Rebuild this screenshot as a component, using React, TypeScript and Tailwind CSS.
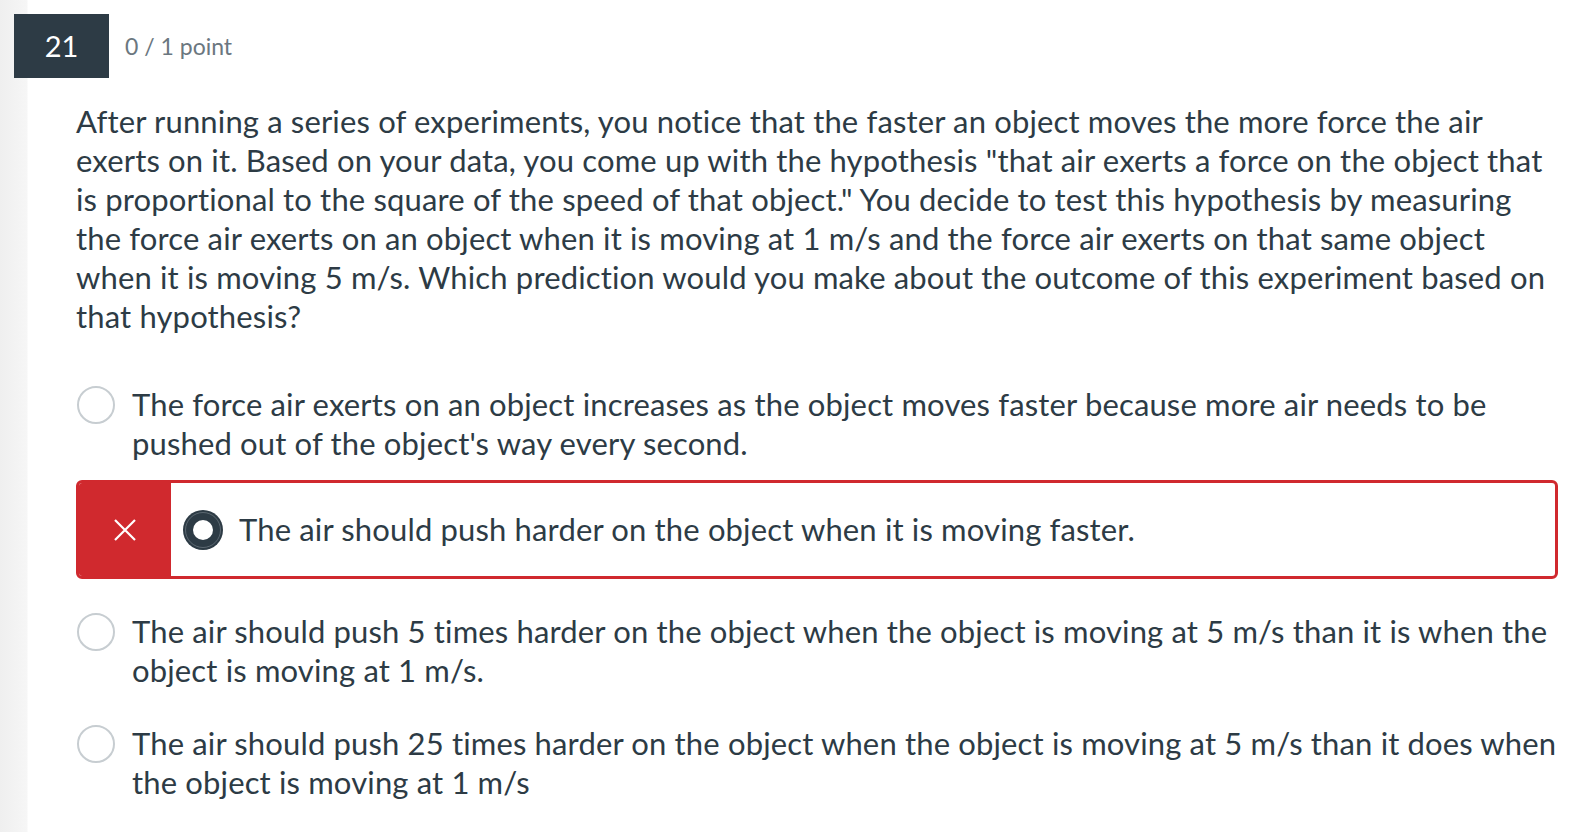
import React from "react";

const font = { fontFamily: "Lato, 'Noto Sans', sans-serif" };

function Radio() {
  return <div className="w-[38px] h-[38px] shrink-0 rounded-full border-2 border-[#c7cdd1] bg-white mt-[1px]" />;
}

function Lines({ lines }: { lines: string[] }) {
  return (
    <>
      {lines.map((l, i) => (
        <span key={i} className="block whitespace-nowrap">
          {l}
        </span>
      ))}
    </>
  );
}

export default function App() {
  return (
    <div
      className="w-[1574px] h-[832px] overflow-hidden text-[#2d3b45] bg-[linear-gradient(to_right,#efefef_0px,#f6f6f6_27px,#ffffff_28px)]"
      style={font}
    >
      <div className="flex items-center pt-[14px] pl-[14px]">
        <div className="w-[95px] h-[64px] bg-[#2d3b45] text-white text-[29px] flex items-center justify-center">21</div>
        <div className="ml-[16px] text-[23px] text-[#6b7780]">0 / 1 point</div>
      </div>
      <div className="pl-[76px]">
        <p className="mt-[24px] text-[31px] leading-[39px] tracking-[0.15px]">
          <Lines
            lines={[
              "After running a series of experiments, you notice that the faster an object moves the more force the air",
              'exerts on it. Based on your data, you come up with the hypothesis "that air exerts a force on the object that',
              'is proportional to the square of the speed of that object." You decide to test this hypothesis by measuring',
              "the force air exerts on an object when it is moving at 1 m/s and the force air exerts on that same object",
              "when it is moving 5 m/s. Which prediction would you make about the outcome of this experiment based on",
              "that hypothesis?",
            ]}
          />
        </p>
        <div className="mt-[49px] flex items-start gap-[17px] pl-[1px]">
          <Radio />
          <div className="text-[31px] leading-[39px] tracking-[0.15px]">
            <Lines
              lines={[
                "The force air exerts on an object increases as the object moves faster because more air needs to be",
                "pushed out of the object's way every second.",
              ]}
            />
          </div>
        </div>
        <div className="mt-[17px] w-[1482px] h-[99px] flex rounded-[6px] border-[3px] border-[#d0292e] overflow-hidden">
          <div className="w-[92px] bg-[#d0292e] flex items-center justify-center">
            <svg width="24" height="24" viewBox="0 0 24 24">
              <path d="M2 2 L22 22 M22 2 L2 22" stroke="white" strokeWidth="2.2" />
            </svg>
          </div>
          <div className="flex items-center pl-[12px]">
            <div className="w-[40px] h-[40px] rounded-full bg-[#2d3b45] flex items-center justify-center relative">
              <div className="absolute inset-[2px] rounded-full border border-[#8a949b]/50" />
              <div className="w-[20px] h-[20px] rounded-full bg-white" />
            </div>
            <div className="ml-[16px] text-[31px] leading-[39px] tracking-[0.15px] whitespace-nowrap">
              The air should push harder on the object when it is moving faster.
            </div>
          </div>
        </div>
        <div className="mt-[33px] flex items-start gap-[17px] pl-[1px]">
          <Radio />
          <div className="text-[31px] leading-[39px] tracking-[0.15px]">
            <Lines
              lines={[
                "The air should push 5 times harder on the object when the object is moving at 5 m/s than it is when the",
                "object is moving at 1 m/s.",
              ]}
            />
          </div>
        </div>
        <div className="mt-[34px] flex items-start gap-[17px] pl-[1px]">
          <Radio />
          <div className="text-[31px] leading-[39px] tracking-[0.15px]">
            <Lines
              lines={[
                "The air should push 25 times harder on the object when the object is moving at 5 m/s than it does when",
                "the object is moving at 1 m/s",
              ]}
            />
          </div>
        </div>
      </div>
    </div>
  );
}
